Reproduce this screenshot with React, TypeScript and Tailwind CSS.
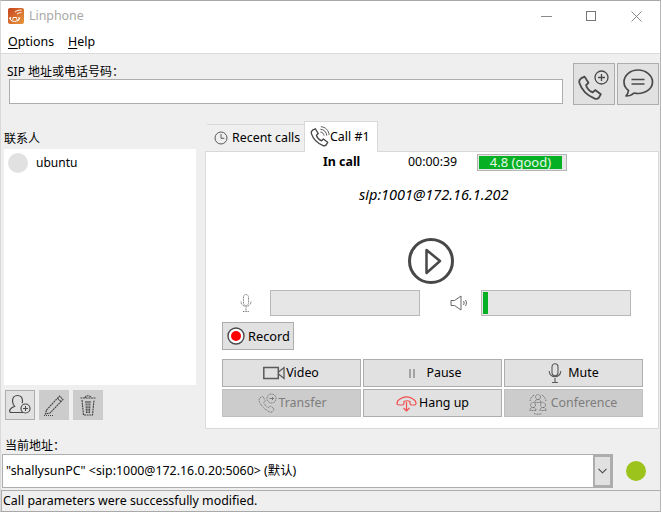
import type { ReactNode } from "react";

const sans = "font-['Noto_Sans','Noto_Sans_CJK_SC',sans-serif]";

function PhoneShape({ dashed = false, color = "#4a4a4a" }: { dashed?: boolean; color?: string }) {
  return (
    <path
      d="M5 4.500 8 3l3.200 5.200-2 2c.8 2.600 2.800 4.800 5.600 6l2-2 4.700 3.500-1.600 2.800c-.8 1-2.200 1.300-3.400.9C10.500 18.800 5.400 13.700 3.700 8.300 3.300 7 3.900 5.300 5 4.500Z"
      fill="none"
      stroke={color}
      strokeWidth={dashed ? 1 : 1.5}
      strokeDasharray={dashed ? "1 1" : undefined}
      strokeLinejoin="round"
    />
  );
}

function AppLogo() {
  return (
    <svg width="16" height="16" viewBox="0 0 16 16" className="shrink-0">
      <defs>
        <linearGradient id="logo" x1="0" y1="0" x2="1" y2="1">
          <stop offset="0" stopColor="#c4451f" />
          <stop offset="1" stopColor="#e8973a" />
        </linearGradient>
      </defs>
      <rect width="16" height="16" rx="2" fill="url(#logo)" />
      <path d="M1.500 9.500c.5 5 9 5.500 10.500 0M3 9c-1 1-1 3.500.5 3.500S5 10.500 5 9.500h3.500c0 1 .2 3 1.500 3s1.500-2.500.5-3.500" fill="none" stroke="#fff" strokeWidth="1" />
      <path d="M7 4c2-1.500 4-2 6.500-2M9 6c1.500-1 3-1.500 4.500-1.500" fill="none" stroke="#fff" strokeWidth="1" />
    </svg>
  );
}

function ToolButton({ children, disabled = false, size = "h-[42px] w-[42px]" }: { children: ReactNode; disabled?: boolean; size?: string }) {
  return (
    <div className={`flex shrink-0 items-center justify-center border ${disabled ? "border-[#cccccc] bg-[#cccccc]" : "border-[#adadad] bg-[#e1e1e1]"} ${size}`}>
      {children}
    </div>
  );
}

function CallButton({ icon, label, disabled = false }: { icon: ReactNode; label: string; disabled?: boolean }) {
  return (
    <div className={`flex h-[28px] items-center justify-center border text-[12.4px] ${disabled ? "border-[#bfbfbf] bg-[#cccccc] text-[#7d7d7d]" : "border-[#adadad] bg-[#e1e1e1] text-black"}`}>
      {icon}
      <span>{label}</span>
    </div>
  );
}

export default function App() {
  return (
    <div className={`h-[512px] w-[662px] overflow-hidden bg-white text-[12.4px] leading-none text-black ${sans}`}>
      <div className="flex h-[512px] w-[661px] flex-col border-x border-y border-l-[#d9d9d9] border-r-[#b5b5b5] border-t-[#a9a9a9] border-b-[#a9a9a9]">
        {/* title bar */}
        <div className="flex h-[30px] shrink-0 items-center bg-white pl-[7px]">
          <AppLogo />
          <span className="ml-[5px] text-[12.4px] text-[#a8a8a8]">Linphone</span>
          <div className="ml-auto flex items-center pr-[18px]">
            <div className="h-px w-[11px] bg-[#8a8a8a]" />
            <div className="ml-[34px] h-[10px] w-[10px] border border-[#777]" />
            <svg width="11" height="11" viewBox="0 0 11 11" className="ml-[35px]">
              <path d="M.5.5l10 10M10.500.500l-10 10" stroke="#888" strokeWidth="1" />
            </svg>
          </div>
        </div>

        {/* menu */}
        <div className="flex h-[23px] shrink-0 items-center gap-[14px] border-b border-[#d9d9d9] bg-white pl-[7px] pt-px">
          <span>
            <span className="underline underline-offset-2">O</span>ptions
          </span>
          <span>
            <span className="underline underline-offset-2">H</span>elp
          </span>
        </div>

        <div className="flex min-h-0 flex-1 flex-col bg-[#efefef]">
          {/* sip address */}
          <div className="flex h-[56px] shrink-0 pl-[6px] pr-[1px] pt-[9px]">
            <div className="flex flex-1 flex-col">
              <span className="h-[16px] pt-[3px] text-[12px]">SIP 地址或电话号码：</span>
              <div className="ml-[2px] h-[25px] w-[554px] border border-[#adadad] bg-white" />
            </div>
            <div className="flex gap-[2px]">
              <ToolButton>
                <svg width="32" height="32" viewBox="0 0 32 32">
                  <g transform="translate(-3 5) scale(1.200)">
                    <PhoneShape />
                  </g>
                  <circle cx="23.500" cy="9.500" r="6.500" fill="none" stroke="#4a4a4a" strokeWidth="1.300" />
                  <path d="M23.500 6v7M20 9.500h7" stroke="#4a4a4a" strokeWidth="1.300" />
                </svg>
              </ToolButton>
              <ToolButton>
                <svg width="32" height="32" viewBox="0 0 32 32">
                  <path d="M16 2C8 2 2 7.500 2 14c0 3.500 1.500 6.300 4.500 8.500-.2 2-1.200 4-2.500 5.500 3.500 0 6-1 8-3 1.300.3 2.700.500 4 .500 8 0 14.500-5 14.500-11.500S24 2 16 2Z" fill="none" stroke="#4a4a4a" strokeWidth="1.700" strokeLinejoin="round" />
                  <path d="M9.500 11.500h13M9.500 16h13" stroke="#4a4a4a" strokeWidth="1.700" />
                </svg>
              </ToolButton>
            </div>
          </div>

          <div className="flex h-[319px] shrink-0 pt-[11px]">
            {/* contacts */}
            <div className="flex w-[204px] shrink-0 flex-col pl-[3px]">
              <span className="flex h-[28px] items-end pb-[4px] text-[12px]">联系人</span>
              <div className="h-[236px] w-[192px] bg-white pl-[4px] pt-[4px]">
                <div className="flex items-center">
                  <div className="h-[20px] w-[20px] rounded-full bg-[#e1e1e1]" />
                  <span className="ml-[8px] text-[12px]">ubuntu</span>
                </div>
              </div>
              <div className="mt-[5px] flex gap-[4px] pl-[1px]">
                <ToolButton size="h-[30px] w-[30px]">
                  <svg width="24" height="24" viewBox="0 0 24 24">
                    <path d="M15 19.500H3.500c-1.500 0-2.200-1-1.800-2.200.7-2 2.800-3 5-4-1.500-1.500-2.200-3.300-2.200-5.300C4.500 4.700 6.500 2.500 9.500 2.500s5 2.200 5 5.500c0 .8-.1 1.500-.4 2.200" fill="none" stroke="#4a4a4a" strokeWidth="1.200" />
                    <circle cx="17.500" cy="15.500" r="4.500" fill="none" stroke="#4a4a4a" strokeWidth="1.200" />
                    <path d="M17.500 13v5M15 15.500h5" stroke="#4a4a4a" strokeWidth="1.100" />
                  </svg>
                </ToolButton>
                <ToolButton disabled size="h-[30px] w-[30px]">
                  <svg width="24" height="24" viewBox="0 0 24 24">
                    <path d="M4.500 17 17.500 3l3.500 3.500L8 20l-4.500 1Zm11-11.800 3.500 3.500" fill="none" stroke="#444" strokeWidth="1.100" strokeDasharray="2 .6" />
                    <path d="M2 22.500h10" stroke="#444" strokeWidth="1" strokeDasharray="1 1" />
                  </svg>
                </ToolButton>
                <ToolButton disabled size="h-[30px] w-[30px]">
                  <svg width="24" height="24" viewBox="0 0 24 24">
                    <path d="M4.500 5h15M9 5c0-3 6-3 6 0M6 7l1.500 15h9L18 7M10 8l.5 12M14 8l-.5 12M12 8v12" fill="none" stroke="#444" strokeWidth="1.100" strokeDasharray="2 .6" />
                  </svg>
                </ToolButton>
              </div>
            </div>

            {/* calls panel */}
            <div className="flex w-[454px] shrink-0 flex-col">
              <div className="flex h-[30px] items-end pl-[2px]">
                <div className="flex h-[27px] w-[97px] items-center border-t border-[#d9d9d9] pl-[7px]">
                  <svg width="14" height="14" viewBox="0 0 14 14" className="mr-[4px] shrink-0">
                    <circle cx="7" cy="7" r="6" fill="none" stroke="#5a5a5a" strokeWidth="1" />
                    <path d="M7 3v4.300h3.300" fill="none" stroke="#5a5a5a" strokeWidth="1" />
                  </svg>
                  <span className="whitespace-nowrap">Recent calls</span>
                </div>
                <div className="relative z-10 -mb-px flex h-[31px] w-[74px] items-center border-x border-t border-[#d9d9d9] bg-white pl-[3px]">
                  <svg width="22" height="22" viewBox="0 0 24 24" className="shrink-0">
                    <PhoneShape />
                    <path d="M13.500 6.500c2.300.3 3.700 1.800 4 4M13.500 3.500c4 .3 6.700 3 7 7M14 .800c5 .2 8.800 4 9 9" fill="none" stroke="#4a4a4a" strokeWidth="1" />
                  </svg>
                  <span className="whitespace-nowrap">Call #1</span>
                </div>
              </div>

              <div className="flex h-[278px] flex-col border border-[#d9d9d9] bg-white">
                <div className="flex h-[20px] shrink-0 items-center">
                  <span className="ml-[117px] w-[85px] font-bold">In call</span>
                  <span className="w-[69px]">00:00:39</span>
                  <div className="h-[17px] w-[90px] border border-[#b5b5b5] bg-[#e6e6e6] p-px">
                    <div className="flex h-full w-[83px] items-center justify-center bg-[#06b025] text-[13px] text-[#e8f7e8]">4.8 (good)</div>
                  </div>
                </div>

                <div className="mt-[15px] h-[20px] pl-[153px] text-[14.5px] italic">sip:1001@172.16.1.202</div>

                <div className="mt-[31px] flex justify-center pr-[2px]">
                  <svg width="46" height="46" viewBox="0 0 46 46">
                    <circle cx="23" cy="23" r="21.500" fill="none" stroke="#484848" strokeWidth="3" />
                    <path d="M18.500 12 32 23 18.500 35Z" fill="none" stroke="#484848" strokeWidth="2.500" strokeLinejoin="round" />
                  </svg>
                </div>

                <div className="mt-[6px] flex h-[26px] items-center">
                  <svg width="14" height="18" viewBox="0 0 14 18" className="ml-[33px] shrink-0">
                    <rect x="4.500" y=".5" width="5" height="11" rx="2.500" fill="none" stroke="#777" strokeDasharray="1 .6" />
                    <path d="M2 7.500c0 6.500 10 6.500 10 0M7 13.500v3.500M4 17.500h6" fill="none" stroke="#777" strokeDasharray="1 .6" />
                  </svg>
                  <div className="ml-[17px] h-[26px] w-[150px] border border-[#b8b8b8] bg-[#e6e6e6]" />
                  <svg width="18" height="16" viewBox="0 0 18 16" className="ml-[30px] shrink-0">
                    <path d="M1 5.500h3.500L11 1v14L4.500 10.500H1Z" fill="none" stroke="#666" strokeWidth="1" />
                    <path d="M13.500 6c.8 1.200.8 2.800 0 4M15.500 5c1.200 1.800 1.200 4.200 0 6" fill="none" stroke="#666" strokeWidth="1" />
                  </svg>
                  <div className="ml-[13px] h-[26px] w-[150px] border border-[#b8b8b8] bg-[#e6e6e6] p-px">
                    <div className="h-full w-[5px] bg-[#06b025]" />
                  </div>
                </div>

                <div className="ml-[16px] mt-[6px] flex h-[28px] w-[72px] items-center border border-[#adadad] bg-[#e1e1e1] pl-[4px]">
                  <svg width="18" height="18" viewBox="0 0 18 18" className="mr-[3px] shrink-0">
                    <circle cx="9" cy="9" r="8" fill="#fff" stroke="#4a4a4a" strokeWidth="1.400" />
                    <circle cx="9" cy="9" r="5" fill="#ff0000" />
                  </svg>
                  <span className="text-[12.8px]">Record</span>
                </div>

                <div className="ml-[16px] mt-[9px] grid w-[421px] grid-cols-3 gap-[2px]">
                  <CallButton
                    label="Video"
                    icon={
                      <svg width="22" height="14" viewBox="0 0 22 14" className="-ml-[1px] mr-[1px] shrink-0">
                        <rect x=".8" y="1.500" width="14.500" height="11" fill="none" stroke="#5a5a5a" strokeWidth="1.500" />
                        <path d="M15.500 6 21 1.500v11L15.500 8" fill="none" stroke="#5a5a5a" strokeWidth="1.300" />
                      </svg>
                    }
                  />
                  <CallButton
                    label="Pause"
                    icon={
                      <svg width="6" height="9" viewBox="0 0 6 9" className="ml-[6px] mr-[11px] shrink-0">
                        <path d="M1 0v9M5 0v9" stroke="#666" strokeWidth="1" />
                      </svg>
                    }
                  />
                  <CallButton
                    label="Mute"
                    icon={
                      <svg width="14" height="20" viewBox="0 0 14 20" className="mr-[6px] shrink-0">
                        <rect x="4" y=".7" width="6" height="12" rx="3" fill="none" stroke="#5a5a5a" strokeWidth="1.100" />
                        <path d="M1.200 8c0 7.500 11.600 7.500 11.600 0M7 15v4M4 19.500h6" fill="none" stroke="#5a5a5a" strokeWidth="1.100" />
                      </svg>
                    }
                  />
                  <CallButton
                    disabled
                    label="Transfer"
                    icon={
                      <svg width="22" height="20" viewBox="0 0 22 20" className="shrink-0">
                        <g transform="scale(.85) translate(0 1)">
                          <PhoneShape dashed color="#555" />
                        </g>
                        <circle cx="15.500" cy="5.500" r="4.500" fill="none" stroke="#666" strokeWidth=".9" strokeDasharray="1 .6" />
                        <path d="M13.500 5.500h4M16 4l1.500 1.500L16 7" fill="none" stroke="#666" strokeWidth=".8" />
                      </svg>
                    }
                  />
                  <CallButton
                    label="Hang up"
                    icon={
                      <svg width="21" height="18" viewBox="0 0 21 18" className="mr-[2px] shrink-0">
                        <path d="M1 9.500c0-2 1-3.500 3-4.500 4-2.500 9-2.500 13 0 2 1 3 2.500 3 4.500 0 1-.5 1.500-1.500 1.500h-3c-1 0-1.500-.5-1.500-2V7.500c-2-1-4-1-6 0V9c0 1.500-.5 2-1.500 2h-3C1.500 11 1 10.500 1 9.500Z" fill="none" stroke="#f05050" strokeWidth="1.200" />
                        <path d="M10.500 8v9M7.500 14l3 3 3-3" fill="none" stroke="#f05050" strokeWidth="1.200" />
                      </svg>
                    }
                  />
                  <CallButton
                    disabled
                    label="Conference"
                    icon={
                      <svg width="22" height="24" viewBox="0 0 22 24" className="-ml-[3px] mr-[2px] shrink-0">
                        <g fill="none" stroke="#666" strokeWidth=".9" strokeDasharray="1 .6">
                          <circle cx="11" cy="6" r="2.500" />
                          <path d="M7.800 11.500c.3-4 6.100-4 6.400 0Z" />
                          <circle cx="6" cy="14" r="2.500" />
                          <path d="M2.800 19.500c.3-4 6.100-4 6.400 0Z" />
                          <circle cx="16" cy="14" r="2.500" />
                          <path d="M12.800 19.500c.3-4 6.100-4 6.400 0Z" />
                          <path d="M3 10c.5-3 2-5 4.500-6M19 10c-.5-3-2-5-4.500-6M7 22.500c2.500 1 5.500 1 8 0" />
                        </g>
                      </svg>
                    }
                  />
                </div>
              </div>
            </div>
          </div>

          {/* current address */}
          <div className="flex shrink-0 flex-col pt-[11px]">
            <span className="h-[14px] pl-[4px] text-[12px]">当前地址：</span>
            <div className="flex items-center pl-[1px]">
              <div className="flex h-[34px] w-[611px] border border-[#adadad] bg-white">
                <div className="flex flex-1 items-center pl-[3px]">
                  {'"shallysunPC" <sip:1000@172.16.0.20:5060> (默认)'}
                </div>
                <div className="flex w-[19px] items-center justify-center border-2 border-[#adadad] bg-[#e1e1e1]">
                  <svg width="9" height="6" viewBox="0 0 9 6">
                    <path d="M.5.8 4.500 4.800 8.500.8" fill="none" stroke="#444" strokeWidth="1.100" />
                  </svg>
                </div>
              </div>
              <div className="ml-[13px] h-[20px] w-[20px] rounded-full bg-[#9bc31c]" />
            </div>
          </div>

          {/* status bar */}
          <div className="mt-[2px] flex flex-1 items-center border-l border-t border-[#adadad] pl-px">
            Call parameters were successfully modified.
          </div>
        </div>
      </div>
    </div>
  );
}
